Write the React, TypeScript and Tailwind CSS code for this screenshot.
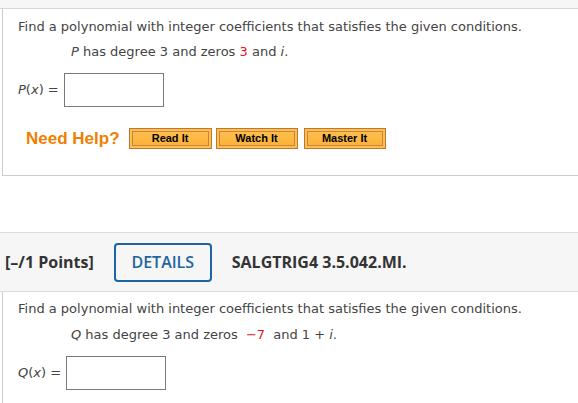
import React from "react";

const qFont = { fontFamily: '"DejaVu Sans", Verdana, sans-serif' };

function HelpButton({ label, width }: { label: string; width: string }) {
  return (
    <div className={"h-[21px] border border-[#c0782c] bg-[#fdbd55] p-[2px] " + width}>
      <div
        className="flex h-full items-center justify-center border border-[#c98636] bg-gradient-to-b from-[#fdbf4f] to-[#fcb23a] text-[11px] font-bold text-black"
        style={{ fontFamily: '"Liberation Sans", Arial, sans-serif' }}
      >
        {label}
      </div>
    </div>
  );
}

function AnswerRow({ fn }: { fn: string }) {
  return (
    <div className="flex items-center pl-[17px]">
      <span className="text-[13px] text-[#444]">
        <i>{fn}</i>(<i>x</i>) =
      </span>
      <div className="ml-[5px] h-[34px] w-[100px] border border-[#7a7a7a] bg-white" />
    </div>
  );
}

export default function App() {
  return (
    <div className="w-[578px] bg-white" style={qFont}>
      <div className="h-[9px] border-b border-[#d6d6d6] bg-[#f6f6f6]" />

      <div className="ml-[2px] border-b border-l border-[#cccccc] pb-[26px] pt-[10px]">
        <div className="pl-[15px] text-[13px] leading-[16px] text-[#444]">
          Find a polynomial with integer coefficients that satisfies the given conditions.
        </div>
        <div className="mt-[9px] pl-[68px] text-[13px] leading-[16px] text-[#444]">
          <i>P</i> has degree 3 and zeros <span className="text-[#e8141b]">3</span> and <i>i</i>.
        </div>
        <div className="mt-[13px] -ml-[2px]">
          <AnswerRow fn="P" />
        </div>
        <div className="mt-[21px] flex h-[21px] items-center pl-[23px]">
          <span
            className="mr-[9px] text-[17px] font-bold leading-[21px] text-[#ee7f00]"
            style={{ fontFamily: '"Liberation Sans", Arial, sans-serif' }}
          >
            Need Help?
          </span>
          <HelpButton label="Read It" width="w-[83px]" />
          <div className="w-[4px]" />
          <HelpButton label="Watch It" width="w-[82px]" />
          <div className="w-[6px]" />
          <HelpButton label="Master It" width="w-[82px]" />
        </div>
      </div>

      <div className="h-[56px]" />

      <div
        className="flex h-[60px] items-center border-y border-[#dcdcdc] bg-[#f6f6f6] pl-[5px] text-[16px] font-bold text-[#333]"
        style={{ fontFamily: '"Open Sans", "Noto Sans", sans-serif' }}
      >
        <span>[–/1 Points]</span>
        <div className="ml-[20px] flex h-[39px] w-[98px] items-center justify-center rounded-[4px] border-2 border-[#1d65a0] font-semibold text-[#1d65a0]">
          DETAILS
        </div>
        <span className="ml-[20px]">SALGTRIG4 3.5.042.MI.</span>
      </div>

      <div className="ml-[2px] border-l border-[#cccccc] pb-[20px] pt-[9px]">
        <div className="pl-[15px] text-[13px] leading-[16px] text-[#444]">
          Find a polynomial with integer coefficients that satisfies the given conditions.
        </div>
        <div className="mt-[10px] pl-[68px] text-[13px] leading-[16px] text-[#444]">
          <i>Q</i> has degree 3 and zeros <span className="px-[4px] text-[#e8141b]">−7</span> and 1 + <i>i</i>.
        </div>
        <div className="mt-[13px] -ml-[2px]">
          <AnswerRow fn="Q" />
        </div>
      </div>
    </div>
  );
}
